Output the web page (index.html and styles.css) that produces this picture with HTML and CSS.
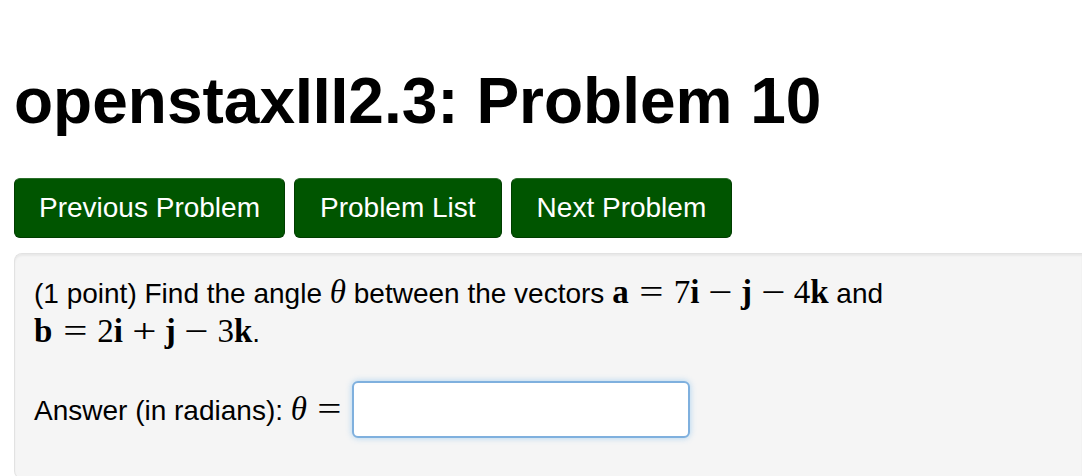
FILE: index.html
```
<!DOCTYPE html>
<html lang="en">
<head>
    <meta charset="UTF-8">
    <title>openstaxIII2.3: Problem 10</title>
    <link rel="stylesheet" href="styles.css">
</head>
<body>
    <div class="page">
        <h1 class="title">openstaxIII2.3: Problem 10</h1>
        <div class="nav">
            <a class="nav-btn" href="#">Previous Problem</a>
            <a class="nav-btn" href="#">Problem List</a>
            <a class="nav-btn" href="#">Next Problem</a>
        </div>
        <div class="problem">
            <p class="statement">
                (1 point) Find the angle <span class="math"><i>θ</i></span> between the vectors
                <span class="math"><b>a</b><span class="rel">=</span>7<b>i</b><span class="op">−</span><b>j</b><span class="op">−</span>4<b>k</b></span> and<br>
                <span class="math"><b>b</b><span class="rel">=</span>2<b>i</b><span class="op">+</span><b>j</b><span class="op">−</span>3<b>k</b></span>.
            </p>
            <div class="answer-row">
                <label for="ans">Answer (in radians): <span class="math"><i>θ</i><span class="rel">=</span></span></label>
                <input type="text" id="ans" class="answer">
            </div>
        </div>
    </div>
</body>
</html>
```

FILE: styles.css
```
body {
    margin: 0;
    font-family: "Liberation Sans", Arial, sans-serif;
    color: #000;
    background: #fff;
}
.page {
    padding: 0 0 0 14px;
}
.title {
    margin: 0;
    padding-top: 63px;
    font-size: 64px;
    line-height: 76px;
    font-weight: bold;
}
.nav {
    display: flex;
    gap: 9px;
    margin-top: 39px;
}
.nav-btn {
    display: block;
    height: 58px;
    line-height: 58px;
    padding: 0 25px;
    font-size: 28px;
    color: #fff;
    text-decoration: none;
    background: #005500;
    border: 1px solid #003d00;
    border-top-color: #2a6e2a;
    border-radius: 6px;
}
.nav-btn:first-child {
    padding: 0 24px;
}
.problem {
    margin-top: 15px;
    background: #f5f5f5;
    border: 1px solid #e2e2e2;
    border-right: none;
    border-radius: 8px 0 0 8px;
    box-shadow: inset 0 2px 2px rgba(0, 0, 0, 0.05);
    padding: 20px 0 40px 19px;
    font-size: 28px;
}
.statement {
    margin: 0;
    line-height: 39px;
}
.math {
    font-family: "Liberation Serif", "DejaVu Serif", serif;
    font-size: 33px;
    line-height: 1;
}
.math b {
    font-weight: bold;
}
.math i {
    font-style: italic;
}
.rel, .op {
    display: inline-block;
    transform: scaleX(1.3);
}
.rel {
    margin: 0 0.4em;
}
.op {
    margin: 0 0.35em;
}
.answer-row {
    display: flex;
    align-items: center;
    margin-top: 29px;
}
.answer {
    width: 334px;
    height: 53px;
    box-sizing: content-box;
    padding: 0;
    border: 2px solid #7fb0de;
    border-radius: 6px;
    background: #fff;
    box-shadow: 0 0 6px rgba(82, 168, 236, 0.45);
    outline: none;
    font-size: 24px;
}
```
